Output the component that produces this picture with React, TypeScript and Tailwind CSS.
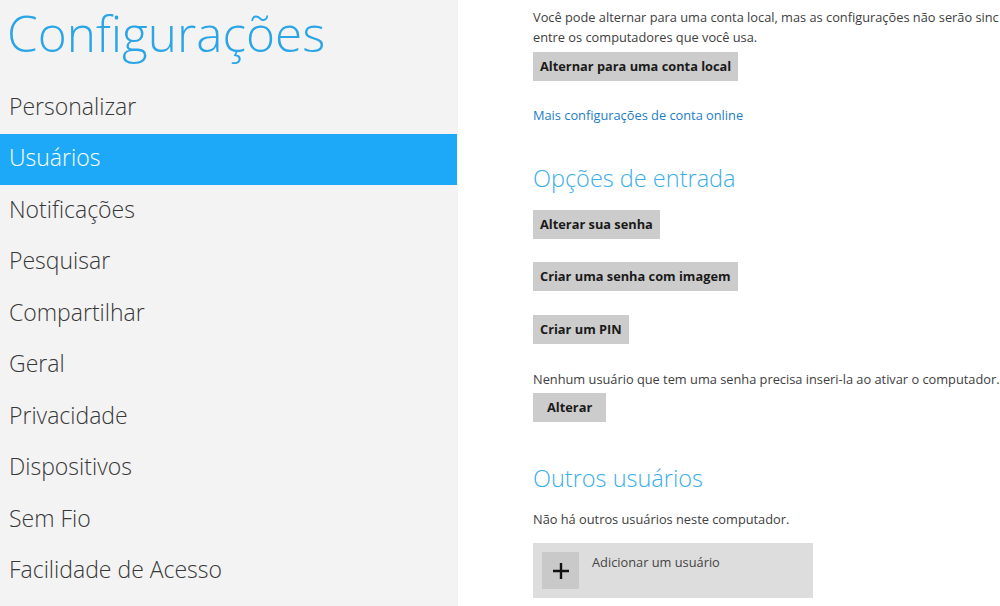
import React from "react";

const menuItems = [
  "Personalizar",
  "Usuários",
  "Notificações",
  "Pesquisar",
  "Compartilhar",
  "Geral",
  "Privacidade",
  "Dispositivos",
  "Sem Fio",
  "Facilidade de Acesso",
];

const font = { fontFamily: '"Open Sans", "Noto Sans", sans-serif' };

const GrayButton: React.FC<{ label: string; className?: string }> = ({
  label,
  className = "",
}) => (
  <button
    type="button"
    className={`block h-[29px] px-[7px] bg-[#cccccc] text-[12.8px] font-bold text-[#1a1a1a] ${className}`}
  >
    {label}
  </button>
);

export default function App() {
  return (
    <div
      className="flex w-[1000px] h-[606px] overflow-hidden bg-white"
      style={font}
    >
      {/* Left menu */}
      <aside className="w-[458px] shrink-0 bg-[#f3f3f3]">
        <h1 className="pl-[7px] pt-[1px] h-[82px] text-[49.5px] leading-[64px] font-light text-[#2ba5e6]">
          Configurações
        </h1>
        <nav>
          {menuItems.map((item) => (
            <div
              key={item}
              className={`h-[51.5px] flex items-center pl-[9px] pb-[4px] text-[23px] font-light ${
                item === "Usuários"
                  ? "bg-[#1ea9f8] text-white w-[457px]"
                  : "text-[#383838]"
              }`}
            >
              {item}
            </div>
          ))}
        </nav>
      </aside>

      {/* Right content */}
      <main className="flex-1 min-w-0 overflow-hidden pl-[75px] text-[12.8px] text-[#404040] whitespace-nowrap">
        <p className="pt-[7px] leading-[20px]">
          Você pode alternar para uma conta local, mas as configurações não serão sinc
          <br />
          entre os computadores que você usa.
        </p>
        <GrayButton label="Alternar para uma conta local" className="mt-[5px]" />
        <p className="mt-[24px] leading-[20px] text-[#1b7cc6]">
          Mais configurações de conta online
        </p>

        <h2 className="mt-[37px] text-[23.5px] leading-[32px] font-light text-[#3aaeea]">
          Opções de entrada
        </h2>
        <GrayButton label="Alterar sua senha" className="mt-[16px]" />
        <GrayButton label="Criar uma senha com imagem" className="mt-[23px]" />
        <GrayButton label="Criar um PIN" className="mt-[24px]" />
        <p className="mt-[25px] leading-[20px]">
          Nenhum usuário que tem uma senha precisa inseri-la ao ativar o computador.
        </p>
        <GrayButton label="Alterar" className="mt-[4px] px-[14px]" />

        <h2 className="mt-[40px] text-[23.5px] leading-[32px] font-light text-[#3aaeea]">
          Outros usuários
        </h2>
        <p className="mt-[15px] leading-[20px]">
          Não há outros usuários neste computador.
        </p>
        <div className="mt-[14px] w-[280px] h-[55px] bg-[#dddddd] flex items-start gap-[13px] p-[9px]">
          <div className="w-[37px] h-[37px] bg-[#c9c9c9] flex items-center justify-center">
            <svg width="20" height="20" viewBox="0 0 20 20">
              <path d="M10 2v16M2 10h16" stroke="#111" strokeWidth="2.4" />
            </svg>
          </div>
          <span className="text-[12.8px] text-[#444] leading-[20px]">
            Adicionar um usuário
          </span>
        </div>
      </main>
    </div>
  );
}
